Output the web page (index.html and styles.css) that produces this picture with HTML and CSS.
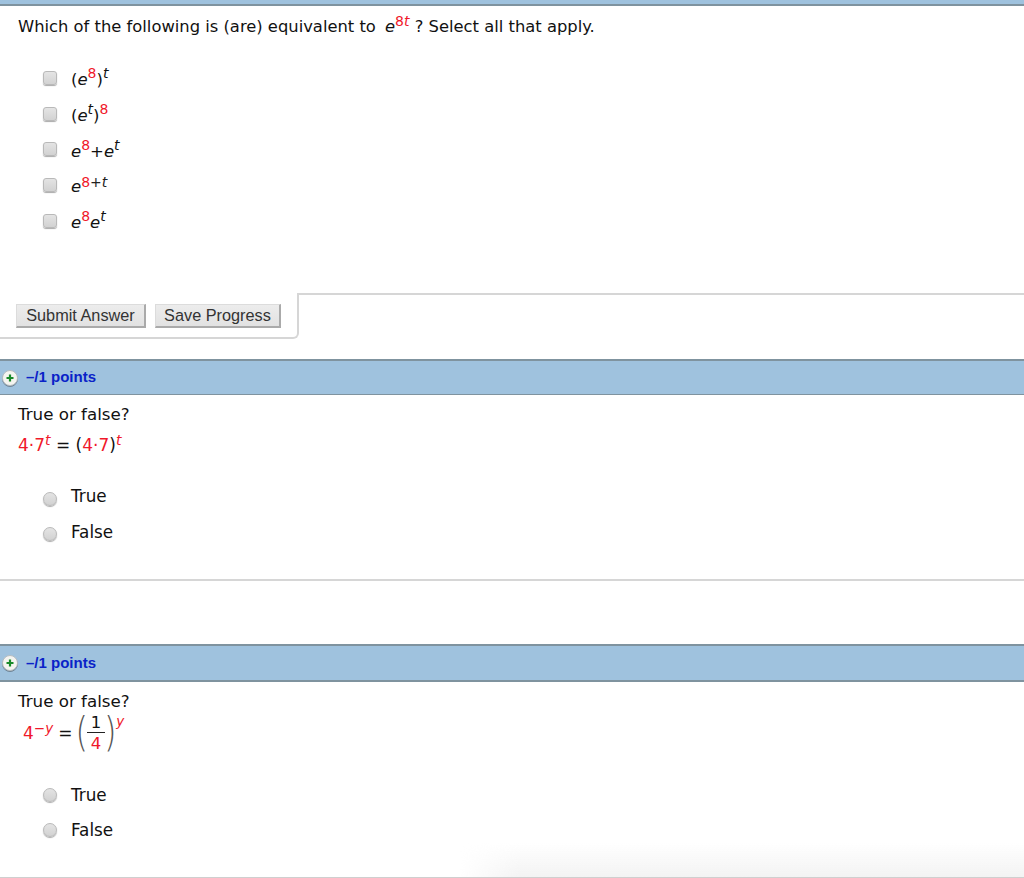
FILE: index.html
```html
<!DOCTYPE html>
<html lang="en">
<head>
    <meta charset="UTF-8" />
    <title>Assignment questions</title>
    <link rel="stylesheet" href="styles.css">
</head>
<body>
<div class="top-bar"></div>

<section class="question first">
    <p class="prompt">Which of the following is (are) equivalent to <span class="inline-math"><i>e</i><sup class="red">8<i>t</i></sup></span> ? Select all that apply.</p>
    <ul class="options check-options">
        <li><input type="checkbox" /><span class="math">(<i>e</i><sup class="red">8</sup>)<sup><i>t</i></sup></span></li>
        <li><input type="checkbox" /><span class="math">(<i>e</i><sup><i>t</i></sup>)<sup class="red">8</sup></span></li>
        <li><input type="checkbox" /><span class="math"><i>e</i><sup class="red">8</sup>+<i>e</i><sup><i>t</i></sup></span></li>
        <li><input type="checkbox" /><span class="math"><i>e</i><sup class="red low">8<span class="dark">+<i>t</i></span></sup></span></li>
        <li><input type="checkbox" /><span class="math"><i>e</i><sup class="red">8</sup><i>e</i><sup><i>t</i></sup></span></li>
    </ul>
</section>

<div class="actions-row">
    <div class="actions">
        <button class="submit-btn">Submit Answer</button>
        <button class="save-btn">Save Progress</button>
    </div>
    <div class="actions-rest"></div>
</div>

<section class="question second">
    <div class="points-bar">
        <svg class="plus-icon" width="16" height="16" viewBox="0 0 16 16">
            <circle cx="8" cy="8" r="7.5" fill="#f4f4f0" stroke="#b5bcc0" />
            <path d="M8 4.5v7M4.5 8h7" stroke="#1a8a2a" stroke-width="2.2" />
        </svg>
        <span>–/1 points</span>
    </div>
    <p class="true-false">True or false?</p>
    <p class="equation"><span class="red">4·7</span><sup class="red"><i>t</i></sup> = (<span class="red">4·7</span>)<sup class="red"><i>t</i></sup></p>
    <ul class="options radio-options">
        <li><input type="radio" name="q2" /><span>True</span></li>
        <li><input type="radio" name="q2" /><span>False</span></li>
    </ul>
</section>

<section class="question third">
    <div class="points-bar">
        <svg class="plus-icon" width="16" height="16" viewBox="0 0 16 16">
            <circle cx="8" cy="8" r="7.5" fill="#f4f4f0" stroke="#b5bcc0" />
            <path d="M8 4.5v7M4.5 8h7" stroke="#1a8a2a" stroke-width="2.2" />
        </svg>
        <span>–/1 points</span>
    </div>
    <p class="true-false">True or false?</p>
    <div class="equation fraction-eq">
        <span class="red">4</span><sup class="red">−<i>y</i></sup>
        <span class="equals">=</span>
        <span class="paren">(</span>
        <span class="fraction"><span class="numer">1</span><span class="denom red">4</span></span>
        <span class="paren">)</span>
        <sup class="red outer-exp"><i>y</i></sup>
    </div>
    <ul class="options radio-options">
        <li><input type="radio" name="q3" /><span>True</span></li>
        <li><input type="radio" name="q3" /><span>False</span></li>
    </ul>
</section>
</body>
</html>
```

FILE: styles.css
```css
html, body {
    margin: 0;
    height: 878px;
    overflow: hidden;
}

body {
    font-family: "DejaVu Sans", Verdana, sans-serif;
    font-size: 16px;
    color: #111;
    background: #fff;
}

p {
    margin: 0;
}

.red {
    color: #f0182a;
}

.dark {
    color: #222;
}

sup {
    font-size: 14px;
    line-height: 0;
    vertical-align: 6px;
}

.top-bar {
    height: 4px;
    background: #9fc2de;
    border-bottom: 2px solid #7f939f;
}

.prompt {
    padding: 11px 18px 0;
    font-size: 16.35px;
    line-height: 20px;
}

.inline-math {
    margin-left: 4px;
}

.options {
    list-style: none;
    margin: 0;
    padding: 0 0 0 43px;
}

.options li {
    display: flex;
    align-items: center;
    gap: 14px;
}

.check-options {
    margin-top: 23px;
}

.check-options li {
    height: 35.7px;
}

.math {
    padding-top: 4px;
    font-size: 16.5px;
}

.math sup {
    font-size: 14px;
    vertical-align: 7px;
}

.math sup.low {
    vertical-align: 5px;
}

input {
    appearance: none;
    margin: 0;
    width: 14px;
    height: 14px;
    flex: none;
    border: 1px solid #b9b9b9;
    background: linear-gradient(#e4e4e4, #d2d2d2);
    box-shadow: 0 1px 1px #aaa;
}

input[type="checkbox"] {
    border-radius: 3px;
}

input[type="radio"] {
    margin-top: 5px;
    border-radius: 50%;
}

.actions-row {
    display: flex;
    height: 46px;
    margin-top: 55px;
}

.actions {
    width: 299px;
    box-sizing: border-box;
    padding: 11px 0 0 16px;
    display: flex;
    align-items: flex-start;
    gap: 9px;
    border-right: 2px solid #d6d6d6;
    border-bottom: 2px solid #d6d6d6;
    border-bottom-right-radius: 6px;
}

.actions-rest {
    flex: 1;
    border-top: 2px solid #d6d6d6;
}

.actions button {
    height: 24px;
    padding: 0;
    font-family: "Liberation Sans", Arial, sans-serif;
    font-size: 16.3px;
    color: #333;
    background: linear-gradient(#ececec, #e2e2e2);
    border: 1px solid #dcdcdc;
    border-right: 2px solid #aaa;
    border-bottom: 2px solid #aaa;
}

.submit-btn {
    width: 130px;
}

.save-btn {
    width: 126px;
}

.points-bar {
    height: 33px;
    display: flex;
    align-items: center;
    gap: 8px;
    padding-left: 2px;
    background: #9fc2de;
    border-top: 2px solid #7f939f;
    border-bottom: 1px solid #7f939f;
    font-family: "Liberation Sans", Arial, sans-serif;
    font-size: 15px;
    font-weight: bold;
    color: #0a22c8;
}

.points-bar span {
    margin-bottom: 2px;
}

.plus-icon {
    flex: none;
    filter: drop-shadow(0 1px 0 #6f8496);
}

.true-false {
    padding: 9px 18px 0;
    font-size: 16.7px;
    line-height: 20px;
}

.equation {
    padding: 10px 18px 0;
    font-size: 17px;
    line-height: 22px;
}

.radio-options {
    font-size: 16.8px;
}

.second {
    margin-top: 20px;
    height: 222px;
    box-sizing: border-box;
    border-bottom: 2px solid #d6d6d6;
}

.second .radio-options {
    margin-top: 22px;
}

.radio-options li {
    height: 35.5px;
}

.third {
    position: relative;
    margin-top: 63px;
    height: 234px;
    box-sizing: border-box;
    border-bottom: 1px solid #cfcfcf;
}

.third .points-bar {
    height: 34px;
    border-bottom-width: 2px;
}

/* soft grey fade along the bottom right */
.third::after {
    content: "";
    position: absolute;
    left: 460px;
    right: 0;
    bottom: 0;
    height: 34px;
    background: linear-gradient(transparent, #f3f3f3);
    -webkit-mask-image: linear-gradient(90deg, transparent, #000 60px);
    mask-image: linear-gradient(90deg, transparent, #000 60px);
    pointer-events: none;
}

.fraction-eq {
    display: flex;
    align-items: center;
    height: 42px;
    padding: 1px 0 0 23px;
}

.fraction-eq sup {
    align-self: flex-start;
    margin-top: 10px;
    vertical-align: baseline;
    line-height: 12px;
    font-size: 13.5px;
}

.fraction-eq .equals {
    margin: 0 3px 0 5px;
}

.paren {
    font-size: 32px;
    font-weight: 200;
    line-height: 38px;
    color: #555;
    transform: translateY(-1px) scaleY(1.3);
}

.fraction {
    display: flex;
    flex-direction: column;
    align-items: center;
    width: 18px;
    margin: 0 -1px;
    font-size: 16.5px;
    line-height: 18px;
}

.numer {
    width: 100%;
    text-align: center;
    border-bottom: 1px solid #222;
}

.denom {
    margin-top: 2px;
}

.fraction-eq .outer-exp {
    margin-top: 3px;
}

.third .radio-options {
    margin-top: 23px;
}

.third .radio-options li {
    height: 35px;
}

.third input[type="radio"] {
    margin-top: 1px;
}
```
